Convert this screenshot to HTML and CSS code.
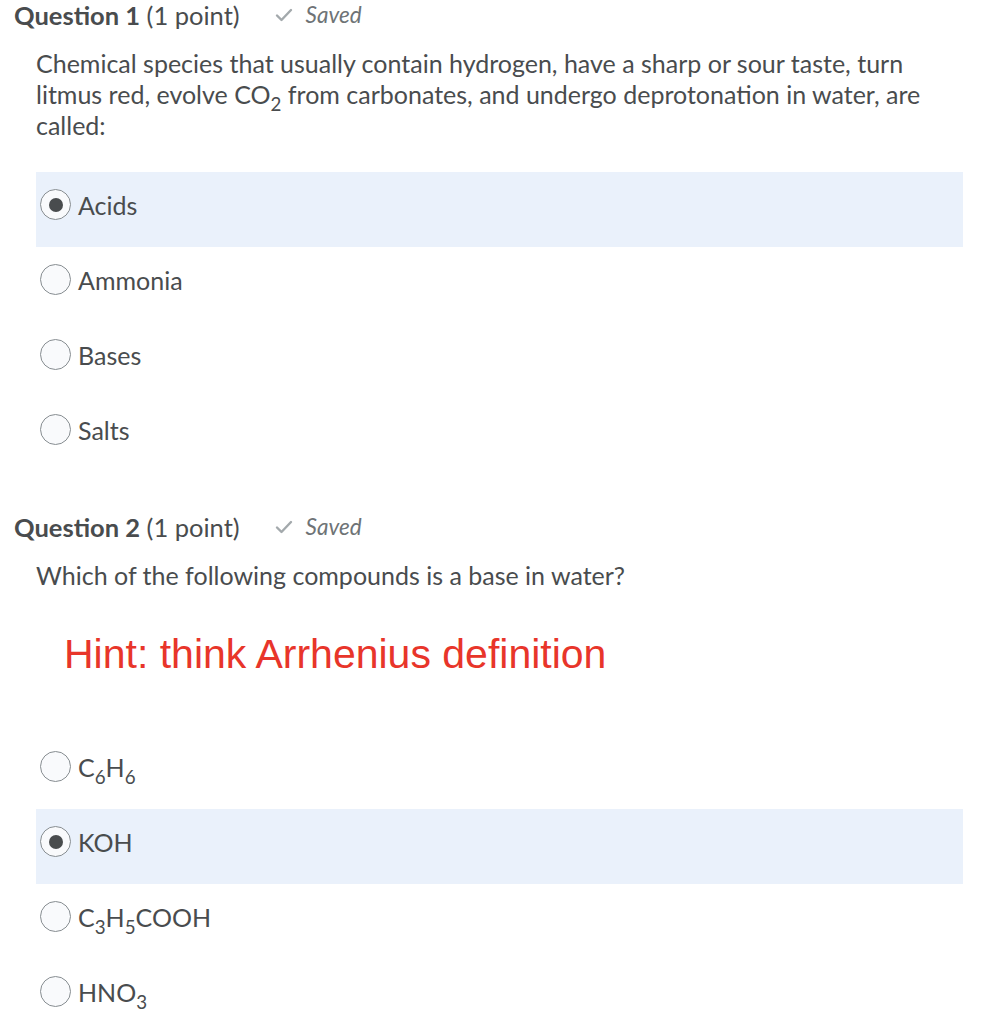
FILE: index.html
```html
<!DOCTYPE html>
<html>
<head>
<meta charset="utf-8">
<link rel="stylesheet" href="styles.css">
</head>
<body>
<section class="question q1">
  <div class="q-header">
    <span class="q-title"><strong>Question 1</strong> (1 point)</span>
    <span class="saved"><svg class="check" viewBox="0 0 18 14" width="18" height="14"><path d="M2 7.5 L6.5 12 L16 2" fill="none" stroke="currentColor" stroke-width="2.4" stroke-linecap="round" stroke-linejoin="round"/></svg><em>Saved</em></span>
  </div>
  <p class="q-text">Chemical species that usually contain hydrogen, have a sharp or sour taste, turn litmus red, evolve CO<sub>2</sub> from carbonates, and undergo deprotonation in water, are called:</p>
  <div class="choices">
    <label class="choice selected"><span class="radio"></span><span class="label">Acids</span></label>
    <label class="choice"><span class="radio"></span><span class="label">Ammonia</span></label>
    <label class="choice"><span class="radio"></span><span class="label">Bases</span></label>
    <label class="choice"><span class="radio"></span><span class="label">Salts</span></label>
  </div>
</section>
<section class="question q2">
  <div class="q-header">
    <span class="q-title"><strong>Question 2</strong> (1 point)</span>
    <span class="saved"><svg class="check" viewBox="0 0 18 14" width="18" height="14"><path d="M2 7.5 L6.5 12 L16 2" fill="none" stroke="currentColor" stroke-width="2.4" stroke-linecap="round" stroke-linejoin="round"/></svg><em>Saved</em></span>
  </div>
  <p class="q-text">Which of the following compounds is a base in water?</p>
  <p class="hint">Hint: think Arrhenius definition</p>
  <div class="choices">
    <label class="choice"><span class="radio"></span><span class="label">C<sub>6</sub>H<sub>6</sub></span></label>
    <label class="choice selected"><span class="radio"></span><span class="label">KOH</span></label>
    <label class="choice"><span class="radio"></span><span class="label">C<sub>3</sub>H<sub>5</sub>COOH</span></label>
    <label class="choice"><span class="radio"></span><span class="label">HNO<sub>3</sub></span></label>
  </div>
</section>
</body>
</html>
```
FILE: styles.css
```css
html, body {
  margin: 0;
  padding: 0;
  background: #fff;
}
body {
  font-family: Lato, "Noto Sans", sans-serif;
  color: #494c4e;
  width: 1002px;
}
.question {
  padding-left: 14px;
}
.q-header {
  display: flex;
  align-items: center;
  height: 30px;
  line-height: 30px;
  font-size: 25.5px;
}
.q-title strong {
  font-weight: 700;
}
.saved {
  display: inline-flex;
  align-items: center;
  margin-left: 35px;
  color: #6e7376;
  font-size: 22.5px;
}
.saved .check {
  color: #a3a9ac;
  margin-right: 13px;
}
.q-text {
  margin: 18px 0 0 22px;
  font-size: 25px;
  line-height: 31px;
  width: 900px;
}
sub {
  font-size: 0.75em;
  vertical-align: -0.38em;
  line-height: 0;
}
.choices {
  margin: 31px 0 0 22px;
  width: 927px;
}
.choice {
  display: flex;
  align-items: center;
  height: 75px;
  padding-left: 4px;
  padding-bottom: 10px;
  box-sizing: border-box;
  font-size: 25px;
}
.choice.selected {
  background: #eaf1fb;
}
.radio {
  width: 31px;
  height: 31px;
  border-radius: 50%;
  border: 1.5px solid #878d91;
  background: #f9fafc;
  box-sizing: border-box;
  display: flex;
  align-items: center;
  justify-content: center;
  margin-right: 7px;
  flex: none;
}
.selected .radio::after {
  content: "";
  width: 14px;
  height: 14px;
  border-radius: 50%;
  background: #494c4e;
}
.q2 {
  margin-top: 40px;
}
.hint {
  margin: 40px 0 0 50px;
  font-family: "Liberation Sans", Arial, sans-serif;
  font-size: 41px;
  color: #e8352a;
  line-height: 47px;
}
.q2 .choices {
  margin-top: 56px;
}
```
